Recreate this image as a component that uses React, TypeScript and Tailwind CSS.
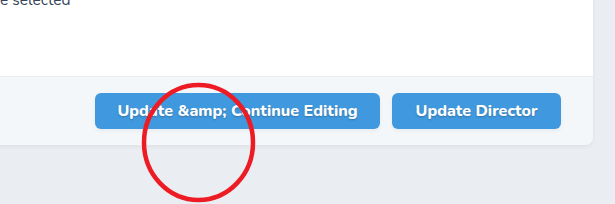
export default function App() {
  return (
    <div
      className="relative h-[204px] w-[615px] overflow-hidden bg-[#eaeef2]"
      style={{ fontFamily: "Nunito, Lato, 'Open Sans', sans-serif" }}
    >
      <div className="-ml-[40px] mr-[22px] -mt-[40px] rounded-lg bg-white shadow-[0_2px_4px_0_rgba(0,0,0,0.05)]">
        <div className="h-[116px] pl-[40px] pt-[28px]">
          <p className="text-[15.5px] leading-6 text-[#35445a]">e selected</p>
        </div>
        <div className="flex justify-end gap-3 rounded-b-lg border-t border-[#e8ecf0] bg-[#f4f7fa] px-8 pb-4 pt-[16px]">
          <button className="h-9 w-[285px] rounded-md bg-[#4099de] text-[16px] font-extrabold text-white shadow-[0_2px_4px_0_rgba(0,0,0,0.05)] [text-shadow:0_1px_2px_rgba(0,0,0,0.25)]">
            Update &amp;amp; Continue Editing
          </button>
          <button className="h-9 w-[169px] rounded-md bg-[#4099de] text-[16px] font-extrabold text-white shadow-[0_2px_4px_0_rgba(0,0,0,0.05)] [text-shadow:0_1px_2px_rgba(0,0,0,0.25)]">
            Update Director
          </button>
        </div>
      </div>
      <svg
        className="pointer-events-none absolute left-0 top-0"
        width="615"
        height="204"
        viewBox="0 0 615 204"
      >
        <ellipse cx="198.5" cy="142.5" rx="54.5" ry="57.5" fill="none" stroke="#ed1c24" strokeWidth="4.5" />
      </svg>
    </div>
  );
}
